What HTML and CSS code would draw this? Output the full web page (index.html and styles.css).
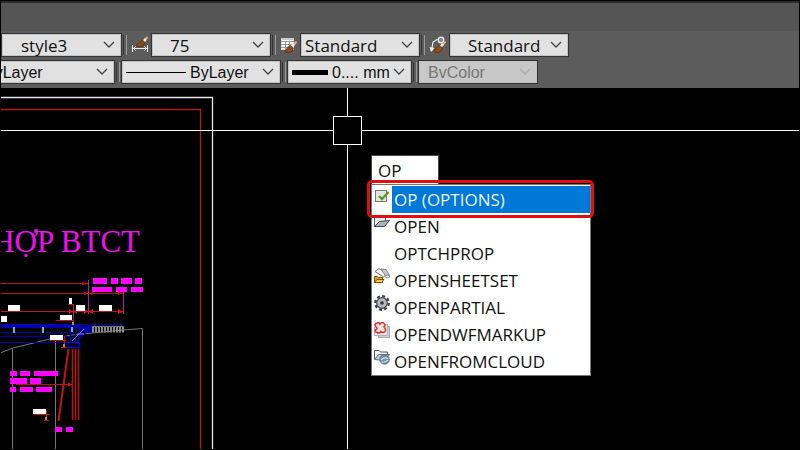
FILE: index.html
```
<!DOCTYPE html>
<html lang="vi">
<head>
    <meta charset="UTF-8">
    <meta name="viewport" content="width=device-width, initial-scale=1.0">
    <title>CAD Workspace</title>
    <link rel="stylesheet" href="styles.css">
</head>
<body>
    <svg class="defs" aria-hidden="true">
        <symbol id="chevron" viewBox="0 0 12 8">
            <path d="M1 1 L6 6 L11 1" fill="none" stroke="currentColor" stroke-width="1.3"/>
        </symbol>
        <symbol id="brush" viewBox="0 0 12 12">
            <path d="M11.500 0.500 L8 4.500" stroke="#f0b060" stroke-width="2"/>
            <path d="M9 3 L6.500 6" stroke="#eee" stroke-width="2.600"/>
            <path d="M0 11 Q2 5.500 5.500 4.500 L8.500 7 Q8 10.500 5 11.500 Q2.500 12 0 11 Z" fill="#8f4a1c" stroke="#5a2c12" stroke-width="0.700"/>
        </symbol>
    </svg>

    <header>
        <div class="ribbon"></div>
        <div class="toolbars">
            <div class="toolbar">
                <div class="combo text-style">
                    <select aria-label="Text style"><option>style3</option></select>
                    <svg class="chevron"><use href="#chevron"/></svg>
                </div>
                <span class="grip"></span>
                <button class="tool" aria-label="Dimension style">
                    <svg width="18" height="18" viewBox="0 0 18 18">
                        <path d="M1.500 9 V16 M16.500 9 V16 M2 12.500 H16 M4.500 10.500 L2.500 12.500 L4.500 14.500 M13.500 10.500 L15.500 12.500 L13.500 14.500" fill="none" stroke="#eee"/>
                        <path d="M16.500 1 L14 4" stroke="#f0b060" stroke-width="2"/>
                        <path d="M14.500 3 L12.500 6" stroke="#eee" stroke-width="2.600"/>
                        <path d="M5 10 Q8 5.500 11.500 4 L14 6.500 Q13 10 10 10.500 Q7.500 11 5 10 Z" fill="#8f4a1c" stroke="#5a2c12" stroke-width="0.700"/>
                    </svg>
                </button>
                <div class="combo dim-style">
                    <select aria-label="Dimension style list"><option>75</option></select>
                    <svg class="chevron"><use href="#chevron"/></svg>
                </div>
                <span class="grip"></span>
                <button class="tool" aria-label="Table style">
                    <svg width="18" height="18" viewBox="0 0 18 18">
                        <rect x="1.500" y="2.500" width="12" height="11" fill="#fff" stroke="#ddd"/>
                        <path d="M1 5.500 H14 M1 8.500 H14 M1 11.500 H11 M5.500 5 V14 M9.500 5 V14" stroke="#999"/>
                        <rect x="1" y="2" width="13" height="2" fill="#ccc"/>
                        <use href="#brush" x="5" y="5" width="12" height="12"/>
                    </svg>
                </button>
                <div class="combo table-style">
                    <select aria-label="Table style list"><option>Standard</option></select>
                    <svg class="chevron"><use href="#chevron"/></svg>
                </div>
                <span class="grip"></span>
                <button class="tool" aria-label="Multileader style">
                    <svg width="18" height="18" viewBox="0 0 18 18">
                        <path d="M2.500 15 L4 6 L8 3.500 H10" fill="none" stroke="#eee" stroke-width="1.200"/>
                        <path d="M0.500 11 L2 16 L5.500 12 Z" fill="#eee"/>
                        <circle cx="12" cy="4" r="2.800" fill="#888" stroke="#eee" stroke-width="1.300"/>
                        <use href="#brush" x="5" y="5" width="12" height="12"/>
                    </svg>
                </button>
                <div class="combo leader-style">
                    <select aria-label="Multileader style list"><option>Standard</option></select>
                    <svg class="chevron"><use href="#chevron"/></svg>
                </div>
            </div>

            <div class="toolbar properties">
                <div class="combo layer-color">
                    <select aria-label="Color"><option>ByLayer</option></select>
                    <svg class="chevron"><use href="#chevron"/></svg>
                </div>
                <span class="grip"></span>
                <div class="combo linetype">
                    <span class="sample thin"></span>
                    <select aria-label="Linetype"><option>ByLayer</option></select>
                    <svg class="chevron"><use href="#chevron"/></svg>
                </div>
                <span class="grip"></span>
                <div class="combo lineweight">
                    <span class="sample thick"></span>
                    <select aria-label="Lineweight"><option>0.... mm</option></select>
                    <svg class="chevron"><use href="#chevron"/></svg>
                </div>
                <span class="grip"></span>
                <div class="combo plot-style disabled">
                    <select aria-label="Plot style" disabled><option>BvColor</option></select>
                    <svg class="chevron"><use href="#chevron"/></svg>
                </div>
            </div>
        </div>
    </header>

    <main>
        <svg class="drawing" width="100%" height="100%">
            <g transform="translate(-1 -88)" fill="none">
                <!-- sheet border -->
                <path d="M0 97.500 H212.500 V2000" stroke="#e4e4e4" stroke-width="1.300"/>
                <path d="M0 109.500 H200.500 V2000" stroke="#b01c1c" stroke-width="1.300"/>

                <text x="140" y="252" class="title">HỢP BTCT</text>

                <!-- ground line and section verticals -->
                <path d="M0 353 L13 348 L50 339 L72 335 L123 330 L142.500 328.500 V2000 M12.500 348 V2000 M55.500 340 V2000" stroke="#777"/>

                <!-- dimensions -->
                <path d="M0 283.500 H88 M0 293.500 H123 M0 311.500 H123 M68 304.500 H74 M73.500 304 V325 M56 320.500 H74" stroke="#c01414"/>
                <path d="M82 282 L88 283.500 L82 285 Z M84 292 L88 293.500 L84 295 Z M93 292 L89 293.500 L93 295 Z M118 292 L123 293.500 L118 295 Z M69 309 L77 314 V309 L69 314 Z M84 309 L93 314 V309 L84 314 Z M118 309 L123 311.500 L118 314 Z" fill="#e01010"/>
                <path d="M88.500 280 V314 M123.500 292 V314 M73.500 308 V316" stroke="#b01cb0"/>

                <!-- deck -->
                <rect x="0" y="324" width="80" height="4" fill="#0000a8"/>
                <path d="M0 324.500 H123 M0 327.500 H92 M0 332.500 H72 M0 336.500 H72 M0 342.500 H68" stroke="#0000b4"/>
                <path d="M68 342.500 H79.500 V347.500 H67.500 V342 M70.500 325 V342 M75.500 328 V342 M79 342 V338 L92 328" stroke="#0000c8" stroke-width="1.500"/>
                <path d="M80 326 H92 V332 H85 L78 338 V334 Z" fill="#0000b0"/>
                <path d="M14 327 V333 M43 327 V333 M72 327 V332" stroke="#58b8d8" stroke-width="2"/>
                <path d="M72 341 L84 329 M77 334 L84 334" stroke="#888"/>
                <path d="M92 329.500 H124" stroke="#888" stroke-width="6" stroke-dasharray="2 1"/>
                <path d="M92 326.500 H124" stroke="#777"/>

                <!-- piles -->
                <path d="M68.500 349 L58.500 421" stroke="#c01414" stroke-width="2"/>
                <path d="M72.500 349 V420 M75.500 349 V420 M78.500 349 V420" stroke="#b81414" stroke-width="1.500"/>
                <path d="M16 384.500 H72 M50 340.500 H66 M64.500 336 V347 M61 347.500 H67 M34 414.500 H50 M46.500 410 V420 M44 420.500 H49" stroke="#c01414"/>
                <path d="M68 382.500 L72 384.500 L68 386.500 Z" fill="#e01010"/>
                <path d="M72 322 H74 V325 H72 Z M63 344 H65 V347 H63 Z M45 417 H47 V420 H45 Z" fill="#a8a020"/>

                <!-- level marks -->
                <path d="M8 305 h12 v6 h-12 Z M69 298 h3 v6 h-3 Z M76 305 h9 v6 h-9 Z M99 305 h13 v6 h-13 Z M0 316 h7 v6 h-7 Z M60 315 h12 v5 h-12 Z M50 335 h13 v5 h-13 Z M33 409 h13 v5 h-13 Z" fill="#fff"/>

                <!-- notes, greeked at this zoom -->
                <path d="M93 278 h14 v6 h-14 Z M111 278 h7 v6 h-7 Z M121 278 h11 v6 h-11 Z M135 278 h7 v6 h-7 Z
                         M92 287 h20 v5 h-20 Z M116 287 h11 v5 h-11 Z M131 287 h12 v5 h-12 Z
                         M10 371 h7 v5 h-7 Z M20 371 h10 v5 h-10 Z M34 371 h24 v5 h-24 Z
                         M10 378 h17 v6 h-17 Z M30 378 h11 v6 h-11 Z
                         M10 387 h6 v5 h-6 Z M20 387 h13 v5 h-13 Z M36 387 h16 v5 h-16 Z
                         M55 427 h7 v5 h-7 Z M66 427 h7 v5 h-7 Z" fill="#ff00ff"/>

                <!-- crosshair with pick box -->
                <path d="M0 130.500 H9000 M347.500 0 V9000" stroke="#fff"/>
                <rect x="333.500" y="116.500" width="28" height="28" fill="#000" stroke="#fff"/>
            </g>
        </svg>

        <div class="command">
            <input type="text" value="OP" aria-label="Command">
            <ul class="suggestions">
                <li class="selected">
                    <svg class="icon" viewBox="0 0 16 16">
                        <rect x="1.500" y="3.500" width="11" height="11" fill="#e4e6ea" stroke="#777"/>
                        <path d="M5 9 L8 12 L14.500 5" fill="none" stroke="#5a9c1c" stroke-width="2.400"/>
                    </svg>
                    <button>OP (OPTIONS)</button>
                </li>
                <li>
                    <svg class="icon" viewBox="0 0 16 16">
                        <path d="M0.500 12.500 V1.500 H5 L6.500 3.500 H11.500 V7" fill="#eef0f4" stroke="#555b66"/>
                        <path d="M0.500 12.500 L5.500 7.500 L15.500 6.500 L10.500 12.500 Z" fill="#a8b0bc" stroke="#444a55"/>
                    </svg>
                    <button>OPEN</button>
                </li>
                <li>
                    <span class="icon"></span>
                    <button>OPTCHPROP</button>
                </li>
                <li>
                    <svg class="icon" viewBox="0 0 16 16">
                        <path d="M1 3.500 L5 0.500 L13 6 L9.500 9 Z" fill="#f2f2f4" stroke="#777"/>
                        <path d="M7 1 L12 1.500 L15.500 7.500 L12.500 9.500 Z" fill="#c4c8cc" stroke="#888"/>
                        <ellipse cx="13.500" cy="8.500" rx="2" ry="1.500" fill="#eee" stroke="#888"/>
                        <path d="M0.500 14.500 V8.500 H3.500 L4.500 9.500 H8.500 V14.500 Z" fill="#e0a020" stroke="#7a5208"/>
                        <path d="M0.500 14.500 L3 11.500 H10 L7.500 14.500 Z" fill="#ffd050" stroke="#7a5208"/>
                    </svg>
                    <button>OPENSHEETSET</button>
                </li>
                <li>
                    <svg class="icon" viewBox="0 0 16 16">
                        <circle cx="8" cy="8" r="6.700" fill="none" stroke="#3c4046" stroke-width="2.400" stroke-dasharray="2.900 2.360"/>
                        <circle cx="8" cy="8" r="5.300" fill="#b4b8be" stroke="#4a4e54" stroke-width="1.200"/>
                        <circle cx="8" cy="8" r="1.800" fill="#33373c"/>
                    </svg>
                    <button>OPENPARTIAL</button>
                </li>
                <li>
                    <svg class="icon" viewBox="0 0 16 16">
                        <path d="M4.500 4.500 H15.500 V15.500 H4.500 Z" fill="#d0d2d6" stroke="#aaa"/>
                        <path d="M2.500 2.500 H13.500 V13.500 H0.500 V5" fill="#e8eaee" stroke="#b0b2b6"/>
                        <path d="M2 5 Q-0.500 2 3 1 Q5.500 0 6 2 Q8 -0.500 10 1.500 Q12 3 10 5 Q12.500 7 11 9.500 Q9 11.500 7 9.500 Q5.500 12 3 10.500 Q0 9.500 2 7.500 Q4 6.500 2 5 Z" fill="#fbe0e0" stroke="#d83030" stroke-width="1.500"/>
                    </svg>
                    <button>OPENDWFMARKUP</button>
                </li>
                <li>
                    <svg class="icon" viewBox="0 0 16 16">
                        <path d="M0.500 10.500 V1.500 H5 L6.500 3 H13.500 V6" fill="#eef0f4" stroke="#555b66"/>
                        <path d="M0.500 10.500 L4.500 5.500 H15.500 L11 11.500 Z" fill="#c4cad2" stroke="#666c76"/>
                        <circle cx="10.500" cy="10.500" r="4.800" fill="#6f93aa" stroke="#557488" stroke-width="0.800"/>
                        <path d="M7 11 Q10 7.500 14 9.500 M7.500 13 Q11 14 14 11" fill="none" stroke="#d0e0ea" stroke-width="1.200"/>
                    </svg>
                    <button>OPENFROMCLOUD</button>
                </li>
            </ul>
            <div class="highlight"></div>
        </div>
    </main>
</body>
</html>
```
FILE: styles.css
```
:root {
    --ui-font: "Open Sans", "Noto Sans", sans-serif;
    --bar-color: #5c5c5c;
    --field-color: #e1e1e1;
    --edge-color: #333;
}

* {
    box-sizing: border-box;
    margin: 0;
    padding: 0;
}

body {
    display: flex;
    flex-direction: column;
    height: 100vh;
    border: 1px solid #000;
    background: #000;
    font-family: var(--ui-font);
    font-size: 17px;
    overflow: hidden;
}

.defs {
    position: absolute;
    width: 0;
    height: 0;
}

header {
    background: var(--bar-color);
    overflow: hidden;
}

.ribbon {
    height: 30px;
    border-top: 2px solid #2b2b2b;
    background: #555;
}

.toolbars {
    display: flex;
    flex-direction: column;
    gap: 3px;
    padding: 2px 0 4px;
}

.toolbar {
    display: flex;
    align-items: center;
    height: 24px;
}

.combo {
    display: flex;
    align-items: center;
    flex: none;
    height: 24px;
    padding-right: 6px;
    border: 1px solid var(--edge-color);
    background: var(--field-color);
    box-shadow: inset 0 0 0 1px #c4c4c4;
    color: #111;
}

.combo select {
    flex: 1;
    min-width: 0;
    height: 22px;
    border: none;
    background: transparent;
    color: inherit;
    font-family: inherit;
    font-size: 17px;
    appearance: none;
    outline: none;
}

.properties .combo {
    font-family: "Liberation Sans", Arial, sans-serif;
}

.properties select {
    font-size: 16px;
}

.chevron {
    flex: none;
    width: 12px;
    height: 8px;
    color: #444;
    pointer-events: none;
}

.grip {
    flex: none;
    width: 4px;
    height: 20px;
    margin: 0 1px;
    border-left: 1px solid #333;
    border-right: 1px solid #999;
}

.tool {
    display: flex;
    align-items: center;
    justify-content: center;
    flex: none;
    width: 23px;
    height: 22px;
    border: none;
    background: none;
}

.text-style {
    width: 121px;
    padding-left: 19px;
}

.dim-style {
    width: 120px;
    padding-left: 18px;
}

.table-style {
    width: 120px;
    padding-left: 4px;
}

.leader-style {
    width: 120px;
    padding-left: 18px;
}

/* the properties bar is scrolled partly out of view */
.properties {
    margin-left: -20px;
}

.layer-color {
    width: 134px;
    padding-left: 2px;
}

.linetype {
    width: 160px;
    padding-left: 4px;
}

.lineweight {
    width: 125px;
    padding-left: 4px;
}

.plot-style {
    width: 120px;
    padding-left: 9px;
}

.sample {
    flex: none;
    background: #000;
}

.thin {
    width: 60px;
    height: 1px;
    margin-right: 4px;
}

.thick {
    width: 36px;
    height: 5px;
    margin-right: 4px;
}

.disabled {
    background: #c8c8c8;
    color: #777;
}

.disabled select {
    opacity: 1;
}

.disabled .chevron {
    color: #aaa;
}

main {
    position: relative;
    flex: 1;
    min-height: 0;
}

.drawing {
    display: block;
    position: absolute;
}

.title {
    fill: #f010f0;
    font-family: "Liberation Serif", "Times New Roman", serif;
    font-size: 31px;
    text-anchor: end;
}

/* floats on the canvas beside the cursor */
.command {
    position: absolute;
    left: 370px;
    top: 67px;
    width: 220px;
}

.command input {
    display: block;
    width: 68px;
    height: 29px;
    padding-left: 6px;
    border: 1px solid #444;
    border-bottom: none;
    background: #fff;
    color: #111;
    font-family: inherit;
    font-size: 17px;
    outline: none;
}

.suggestions {
    list-style: none;
    padding-top: 1px;
    border: 1px solid #777;
    background: #fff;
}

.suggestions li {
    display: flex;
    height: 27px;
}

.icon {
    flex: none;
    width: 16px;
    height: 16px;
    margin: 1px 2px;
}

.suggestions button {
    flex: 1;
    padding-left: 2px;
    border: none;
    background: none;
    color: #111;
    font-family: inherit;
    font-size: 17px;
    text-align: left;
}

.suggestions .selected button {
    background: #0078d7;
    color: #e8f4ff;
}

.highlight {
    position: absolute;
    left: -4px;
    right: -3px;
    top: 25px;
    height: 38px;
    border: 3px solid #e01010;
    border-radius: 5px;
    pointer-events: none;
}
```
